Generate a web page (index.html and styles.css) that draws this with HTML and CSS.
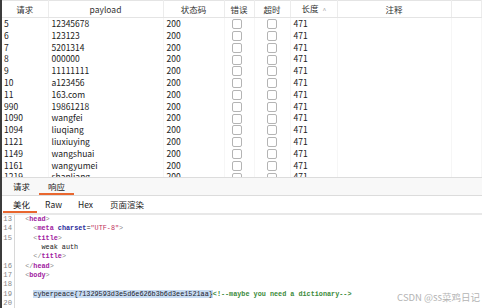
FILE: index.html
```html
<!DOCTYPE html>
<html lang="zh-CN">
<head>
    <meta charset="UTF-8">
    <title>Intruder 结果</title>
    <link rel="stylesheet" href="styles.css">
</head>
<body>
    <div class="results">
        <table class="result-table">
            <colgroup>
                <col style="width:46px"><col style="width:115px"><col style="width:61px"><col style="width:30px">
                <col style="width:36px"><col style="width:47px"><col style="width:114px"><col>
            </colgroup>
            <thead>
                <tr>
                    <th>请求</th>
                    <th>payload</th>
                    <th>状态码</th>
                    <th>错误</th>
                    <th>超时</th>
                    <th class="sorted">长度 <span class="sort-arrow">^</span></th>
                    <th>注释</th>
                    <th></th>
                </tr>
            </thead>
            <tbody id="resultRows"></tbody>
        </table>
    </div>

    <div class="tabs tabs-main">
        <span class="tab">请求</span>
        <span class="tab active">响应</span>
    </div>
    <div class="tabs tabs-view">
        <span class="tab active">美化</span>
        <span class="tab">Raw</span>
        <span class="tab">Hex</span>
        <span class="tab">页面渲染</span>
    </div>

    <div class="code">
        <div class="line"><span class="ln">13</span><span class="src">  <span class="br">&lt;</span><span class="tag">head</span><span class="br">&gt;</span></span></div>
        <div class="line"><span class="ln">14</span><span class="src">    <span class="br">&lt;</span><span class="tag">meta</span> <span class="attr">charset</span>=<span class="str">"UTF-8"</span><span class="br">&gt;</span></span></div>
        <div class="line"><span class="ln">15</span><span class="src">    <span class="br">&lt;</span><span class="tag">title</span><span class="br">&gt;</span></span></div>
        <div class="line"><span class="ln"></span><span class="src">      weak auth</span></div>
        <div class="line"><span class="ln"></span><span class="src">    <span class="br">&lt;/</span><span class="tag">title</span><span class="br">&gt;</span></span></div>
        <div class="line"><span class="ln">16</span><span class="src">  <span class="br">&lt;/</span><span class="tag">head</span><span class="br">&gt;</span></span></div>
        <div class="line"><span class="ln">17</span><span class="src">  <span class="br">&lt;</span><span class="tag">body</span><span class="br">&gt;</span></span></div>
        <div class="line"><span class="ln">18</span><span class="src"></span></div>
        <div class="line"><span class="ln">19</span><span class="src">    <span class="selected">cyberpeace{71329593d3e5d6e626b3b6d3ee1521aa}</span><span class="comment">&lt;!--maybe you need a dictionary--&gt;</span></span></div>
        <div class="line"><span class="ln">20</span><span class="src"></span></div>
    </div>

    <div class="watermark">CSDN @ss菜鸡日记</div>

    <script>
        const results = [
            ['5', '12345678'], ['6', '123123'], ['7', '5201314'], ['8', '000000'],
            ['9', '11111111'], ['10', 'a123456'], ['11', '163.com'], ['990', '19861218'],
            ['1090', 'wangfei'], ['1094', 'liuqiang'], ['1121', 'liuxiuying'],
            ['1149', 'wangshuai'], ['1161', 'wangyumei'], ['1219', 'shanliang']
        ];

        const tbody = document.getElementById('resultRows');
        results.forEach(([id, payload]) => {
            const tr = document.createElement('tr');
            tr.innerHTML = `
                <td>${id}</td>
                <td>${payload}</td>
                <td>200</td>
                <td class="check check-error"><span class="box"></span></td>
                <td class="check"><span class="box"></span></td>
                <td>471</td>
                <td></td>
                <td></td>
            `;
            tbody.appendChild(tr);
        });
    </script>
</body>
</html>
```

FILE: styles.css
```css
body {
    margin: 0;
    width: 482px;
    height: 308px;
    overflow: hidden;
    background-color: #ffffff;
    color: #222222;
    font-family: 'Noto Sans CJK SC', 'Noto Sans', sans-serif;
    font-size: 8.5px;
    border-left: 2px solid #3c3c3c;
    box-sizing: border-box;
    position: relative;
}

.results {
    height: 177px;
    overflow: hidden;
    border-bottom: 1px solid #dcdcdc;
}

.result-table {
    width: 480px;
    table-layout: fixed;
    border-collapse: collapse;
}

.result-table th {
    height: 15px;
    padding: 0;
    font-weight: 400;
    color: #333333;
    text-align: center;
    border-top: 1px solid #e4e4e4;
    border-bottom: 1px solid #e4e4e4;
    border-right: 1px solid #ececec;
    line-height: 15px;
}

.result-table th.sorted {
    text-align: left;
    padding-left: 11px;
}

.sort-arrow {
    display: inline-block;
    color: #aaaaaa;
    font-size: 7px;
    margin-left: 2px;
    transform: translateY(1px);
}

.result-table td {
    height: 11.8px;
    padding: 0 0 0 3px;
    line-height: 11.8px;
    white-space: nowrap;
    overflow: hidden;
    border-right: 1px solid #f6f6f6;
}

.result-table td:first-child {
    padding-left: 2px;
}

.result-table td.check {
    text-align: center;
    padding: 0;
}

.result-table td.check-error {
    text-align: left;
    padding-left: 7px;
}

.box {
    display: inline-block;
    width: 8px;
    height: 8px;
    border: 1px solid #b4b4b4;
    border-radius: 2px;
    vertical-align: middle;
    margin-top: -1px;
}

.tabs {
    display: flex;
    align-items: stretch;
}

.tabs .tab {
    display: flex;
    align-items: center;
    padding: 0 8px;
    border-bottom: 2px solid transparent;
}

.tabs .tab.active {
    border-bottom-color: #e9672f;
}

.tabs-main {
    height: 17px;
    background-color: #f8f8f8;
    border-bottom: 1px solid #dcdcdc;
    padding-left: 2px;
    gap: 1px;
}

.tabs-main .tab {
    padding: 0 9px;
}

.tabs-main .tab.active {
    margin-left: -1px;
}

.tabs-view {
    height: 17px;
    background-color: #ffffff;
    border-bottom: 2px solid #e8e8e8;
    padding-left: 1px;
}

.tabs-view .tab {
    padding: 0 9px;
}

.tabs-view .tab:first-child {
    padding: 0 7px 0 10px;
}

.tabs-view .tab:nth-child(2),
.tabs-view .tab:nth-child(3) {
    padding: 0 8px;
}

.tabs-view .tab:nth-child(3) {
    margin-left: 0;
}

.tabs-view .tab:nth-child(4) {
    padding-left: 9px;
}

.code {
    font-family: 'Liberation Mono', monospace;
    font-size: 6.8px;
    color: #222222;
}

.code .line {
    display: flex;
    height: 9.35px;
    line-height: 9.35px;
}

.code .ln {
    width: 10px;
    flex-shrink: 0;
    text-align: right;
    color: #888888;
    font-size: 7.2px;
    padding-right: 2px;
    border-right: 1px solid #d8d8d8;
}

.code .src {
    white-space: pre;
    padding-left: 2px;
}

.br {
    color: #8a8a8a;
}

.tag {
    color: #a020a0;
    font-weight: bold;
}

.attr {
    color: #2a2a9a;
    font-weight: bold;
}

.str {
    color: #c0305a;
}

.selected {
    background-color: #c8dcf3;
    color: #1a1a2a;
}

.comment {
    color: #3a8a3a;
    font-weight: bold;
}

.watermark {
    position: absolute;
    right: 2px;
    bottom: 4px;
    color: #b4b4b4;
    font-size: 9.5px;
}
```
